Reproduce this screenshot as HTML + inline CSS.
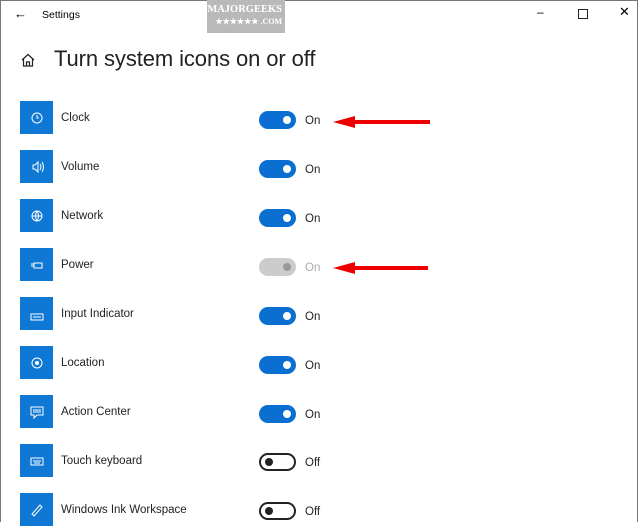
<!DOCTYPE html>
<html><head><style>
body{margin:0;width:640px;height:522px;overflow:hidden;background:#fff;font-family:"Liberation Sans",sans-serif;position:relative}
.frame{position:absolute;left:0;top:0;width:638px;height:522px;border-left:1px solid #777;border-right:1px solid #777;border-top:1px solid #777;box-sizing:border-box}
.t{position:absolute;color:#000}
.ib{position:absolute;left:20px;width:33px;height:33px;background:#0f78d4}
.lab{position:absolute;left:61px;font-size:11.5px;color:#222}
.tg{position:absolute;left:259px;width:37px;height:18px;border-radius:10px;background:#0a6fd0}
.tg::after{content:"";position:absolute;right:5px;top:5px;width:8px;height:8px;border-radius:50%;background:#fff}
.tg.dis{background:#ccc}.tg.dis::after{background:#999}
.tg.off{background:#fff;border:2px solid #222;box-sizing:border-box}
.tg.off::after{left:4px;right:auto;top:3px;background:#222}
.st{position:absolute;left:305px;font-size:11.5px;color:#222}
</style></head><body>
<div class="frame"></div>
<div class="t" style="left:14px;top:6px;font-size:13px">&#8592;</div>
<div class="t" style="left:42px;top:9px;font-size:10.5px">Settings</div>
<div style="position:absolute;left:207px;top:0;width:78px;height:33px;background:#b9b9b9;color:#fff;font:bold 10.5px 'Liberation Serif',serif;text-align:right;line-height:12px;padding-right:3px;box-sizing:border-box;overflow:hidden;white-space:nowrap"><div style="padding-top:4px">MAJORGEEKS</div><div style="font-size:8px">★★★★★★ .COM</div></div>
<div class="t" style="left:537px;top:5px;font-size:12px">&#8211;</div>
<div style="position:absolute;left:578px;top:9px;width:8px;height:8px;border:1px solid #222"></div>
<div class="t" style="left:619px;top:4px;font-size:13px">&#10005;</div>
<svg style="position:absolute;left:20px;top:52px" width="16" height="16" viewBox="0 0 16 16"><path d="M2 8 L8 2.5 L14 8 M3.5 7 V14 H12.5 V7 M6.5 14 V10 H9.5 V14" fill="none" stroke="#222" stroke-width="1.2"/></svg>
<div class="t" style="left:54px;top:46px;font-size:22px;color:#222;letter-spacing:-0.1px">Turn system icons on or off</div>

<div class="ib" style="top:101px"></div><div class="lab" style="top:112px">Clock</div><div class="tg" style="top:111px"></div><div class="st" style="top:115px">On</div>
<div class="ib" style="top:150px"></div><div class="lab" style="top:161px">Volume</div><div class="tg" style="top:160px"></div><div class="st" style="top:164px">On</div>
<div class="ib" style="top:199px"></div><div class="lab" style="top:210px">Network</div><div class="tg" style="top:209px"></div><div class="st" style="top:213px">On</div>
<div class="ib" style="top:248px"></div><div class="lab" style="top:259px">Power</div><div class="tg dis" style="top:258px"></div><div class="st" style="top:262px;color:#aaa">On</div>
<div class="ib" style="top:297px"></div><div class="lab" style="top:308px">Input Indicator</div><div class="tg" style="top:307px"></div><div class="st" style="top:311px">On</div>
<div class="ib" style="top:346px"></div><div class="lab" style="top:357px">Location</div><div class="tg" style="top:356px"></div><div class="st" style="top:360px">On</div>
<div class="ib" style="top:395px"></div><div class="lab" style="top:406px">Action Center</div><div class="tg" style="top:405px"></div><div class="st" style="top:409px">On</div>
<div class="ib" style="top:444px"></div><div class="lab" style="top:455px">Touch keyboard</div><div class="tg off" style="top:453px"></div><div class="st" style="top:457px">Off</div>
<div class="ib" style="top:493px"></div><div class="lab" style="top:504px">Windows Ink Workspace</div><div class="tg off" style="top:502px"></div><div class="st" style="top:506px">Off</div>

<svg style="position:absolute;left:20px;top:101px" width="34" height="430" viewBox="0 0 34 430" fill="none" stroke="#fff" stroke-width="1">
<circle cx="17" cy="17" r="5"/><path d="M17 14V17H19"/>
<path d="M13 64h2l3-3v10l-3-3h-2z M20 63q2 3 0 6 M22 61q3 5 0 10"/>
<circle cx="17" cy="115" r="5"/><path d="M12 115h10 M17 110q-3 5 0 10 M17 110q3 5 0 10"/>
<rect x="14" y="162" width="8" height="5"/><path d="M11 163h3 M11 165h3"/>
<rect x="11" y="213" width="12" height="6"/><path d="M13 216h8"/>
<circle cx="17" cy="262" r="5"/><circle cx="17" cy="262" r="1.5" fill="#fff"/>
<path d="M11 306h12v8h-6l-3 3v-3h-3z M13 309h8 M13 311h8"/>
<rect x="11" y="357" width="12" height="7"/><path d="M13 360h8 M14 362h6"/>
<path d="M12 413l8-9 2 2-8 9z"/>
</svg>
<svg style="position:absolute;left:325px;top:110px" width="110" height="170"><g fill="#e00"><path d="M105 10 L30 10 L30 6 L8 12 L30 18 L30 14 L105 14z"/><path d="M103 156 L30 156 L30 152 L8 158 L30 164 L30 160 L103 160z"/></g></svg>
</body></html>
